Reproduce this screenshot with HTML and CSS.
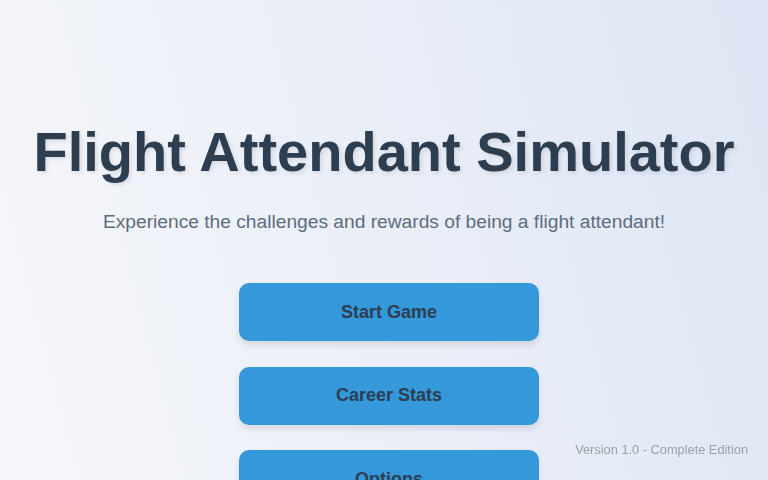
FILE: index.html
```html
<!DOCTYPE html>
<html lang="en">
<head>
  <meta charset="UTF-8">
  <meta name="viewport" content="width=device-width, initial-scale=1.0">
  <title>Flight Attendant Simulator</title>
  <link rel="stylesheet" href="styles.css">
</head>
<body>
  <div class="menu">
    <h1 class="title">Flight Attendant Simulator</h1>
    <p class="subtitle">Experience the challenges and rewards of being a flight attendant!</p>

    <div class="buttons">
      <button class="menu-btn" id="start">Start Game</button>
      <button class="menu-btn" id="stats">Career Stats</button>
      <button class="menu-btn" id="options">Options</button>
    </div>
  </div>

  <div class="version">Version 1.0 - Complete Edition</div>
</body>
</html>
```

FILE: styles.css
```css
* { box-sizing: border-box; }
html, body { margin: 0; height: 100%; }
body { font-family: "Liberation Sans", Arial, sans-serif; background: linear-gradient(75deg, #f6f7fa 0%, #dee6f5 100%); color: #2c3e50; overflow: hidden; }
.menu { display: flex; flex-direction: column; align-items: center; padding-top: 120px; text-align: center; }
.title { font-size: 56px; font-weight: bold; margin: 0; line-height: 64px; color: #2c3e50; text-shadow: 2px 2px 4px rgba(0, 0, 0, 0.1); }
.subtitle { font-size: 19.2px; color: #5d6d7e; margin: 26px 0 0; line-height: 24px; }
.buttons { display: flex; flex-direction: column; gap: 25.6px; margin-top: 49px; margin-left: 10px; }
.menu-btn { width: 300px; height: 58px; padding-top: 1px; background-color: #3498db; color: #2c3e50; border: none; border-radius: 10px; font-family: inherit; font-size: 18px; font-weight: bold; cursor: pointer; box-shadow: 0 4px 6px rgba(0, 0, 0, 0.1); }
.menu-btn:hover { background-color: #2980b9; }
.version { position: fixed; right: 20px; bottom: 23px; font-size: 12.8px; color: #95a5a6; }
```
